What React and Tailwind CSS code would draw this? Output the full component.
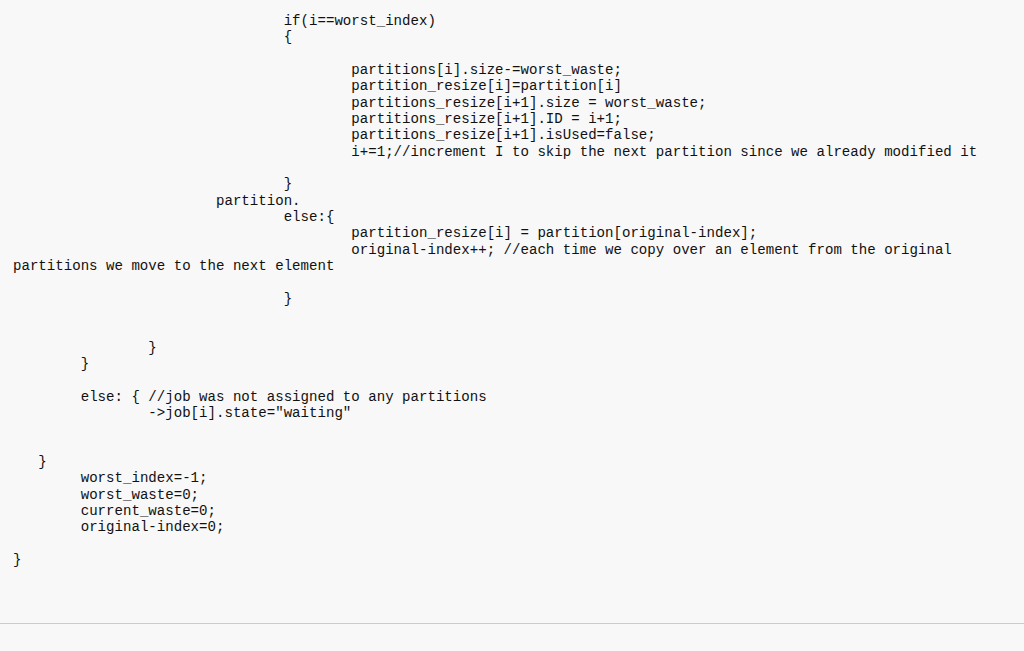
const code = `\t\t\t\tif(i==worst_index)
\t\t\t\t{

\t\t\t\t\tpartitions[i].size-=worst_waste;
\t\t\t\t\tpartition_resize[i]=partition[i]
\t\t\t\t\tpartitions_resize[i+1].size = worst_waste;
\t\t\t\t\tpartitions_resize[i+1].ID = i+1;
\t\t\t\t\tpartitions_resize[i+1].isUsed=false;
\t\t\t\t\ti+=1;//increment I to skip the next partition since we already modified it

\t\t\t\t}
\t\t\tpartition.
\t\t\t\telse:{
\t\t\t\t\tpartition_resize[i] = partition[original-index];
\t\t\t\t\toriginal-index++; //each time we copy over an element from the original
partitions we move to the next element

\t\t\t\t}


\t\t}
\t}

\telse: { //job was not assigned to any partitions
\t\t->job[i].state="waiting"


   }
\tworst_index=-1;
\tworst_waste=0;
\tcurrent_waste=0;
\toriginal-index=0;

}`;

export default function App() {
  return (
    <div className="flex flex-col w-[1024px] h-[651px] bg-[#f8f8f8] overflow-hidden">
      {/* Code block */}
      <div className="h-[623px] shrink-0">
        <pre
          className="pl-[13px] pt-[13px] text-[14.1px] leading-[16.33px] text-[#111] whitespace-pre [tab-size:8]"
          style={{ fontFamily: '"Liberation Mono", "DejaVu Sans Mono", monospace' }}
        >
          {code}
        </pre>
      </div>
      <div className="border-t border-[#cccccc] flex-1" />
    </div>
  );
}
